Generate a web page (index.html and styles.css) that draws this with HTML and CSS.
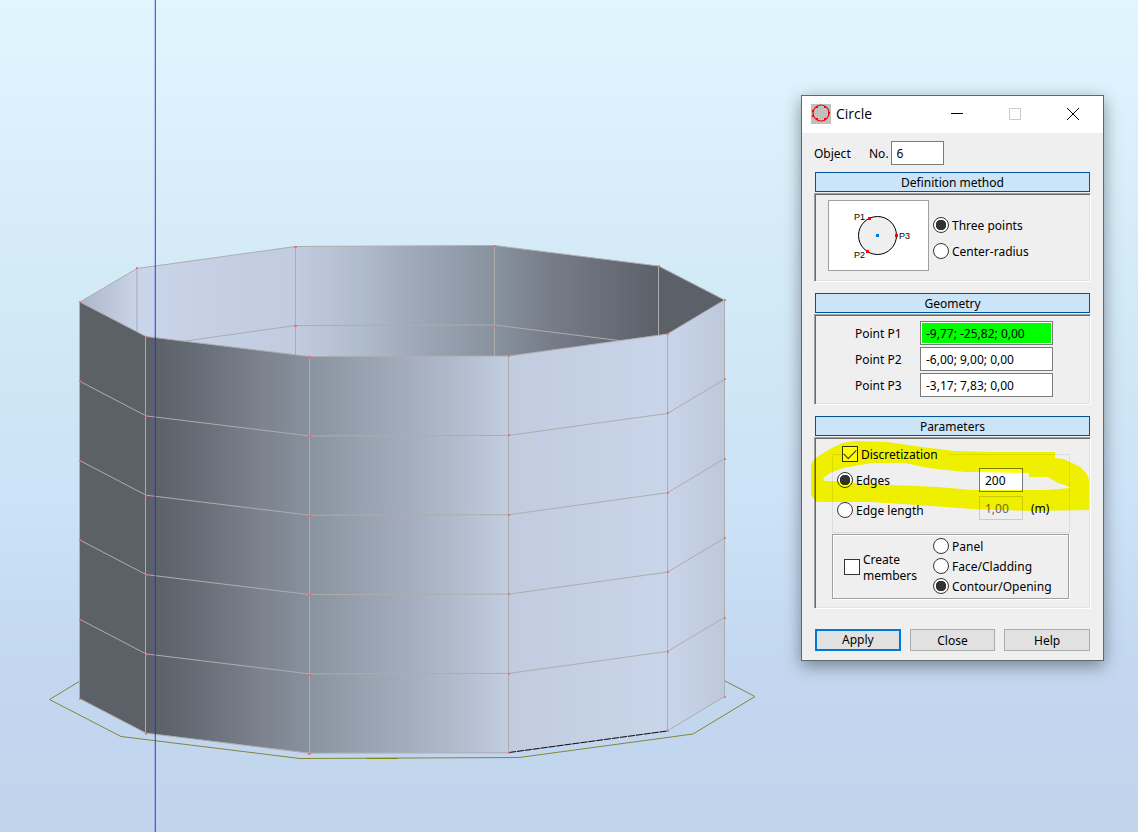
FILE: index.html
```html
<!DOCTYPE html>
<html lang="en">
<head>
<meta charset="utf-8">
<title>Circle</title>
<link rel="stylesheet" href="styles.css">
</head>
<body>
<main class="viewport">
  <svg class="scene" viewBox="0 0 1138 832" preserveAspectRatio="xMinYMin slice" aria-label="Polygonal tank model">
    <defs>
      <linearGradient id="aj"><stop offset="0" stop-color="#acb8c9"/><stop offset=".6" stop-color="#bdc8dc"/><stop offset="1" stop-color="#c8d4e8"/></linearGradient>
      <linearGradient id="ji"><stop offset="0" stop-color="#c9d5ea"/><stop offset="1" stop-color="#c2cbdf"/></linearGradient>
      <linearGradient id="ih"><stop offset="0" stop-color="#c2cbe0"/><stop offset=".35" stop-color="#aebbcb"/><stop offset=".55" stop-color="#a2abbc"/><stop offset="1" stop-color="#88929e"/></linearGradient>
      <linearGradient id="hg"><stop offset="0" stop-color="#88939f"/><stop offset=".3" stop-color="#797e8b"/><stop offset="1" stop-color="#5c6069"/></linearGradient>
      <linearGradient id="bc"><stop offset="0" stop-color="#5b5f67"/><stop offset=".2" stop-color="#61676f"/><stop offset=".7" stop-color="#7c828e"/><stop offset="1" stop-color="#87919d"/></linearGradient>
      <linearGradient id="cd"><stop offset="0" stop-color="#89949f"/><stop offset=".5" stop-color="#a4adbe"/><stop offset=".7" stop-color="#aebaca"/><stop offset="1" stop-color="#c2cde1"/></linearGradient>
      <linearGradient id="de"><stop offset="0" stop-color="#c1ccdf"/><stop offset="1" stop-color="#c9d5ea"/></linearGradient>
      <linearGradient id="ef"><stop offset="0" stop-color="#c9d5ea"/><stop offset="1" stop-color="#bdc8db"/></linearGradient>
      <path id="ring" d="M80 302L146 336.500 309.500 356.500 509 356 667.500 334 724.500 300"/>
      <g id="nodes">
        <rect x="79" y="301" width="2" height="2"/><rect x="145" y="336" width="2" height="2"/><rect x="308" y="356" width="3" height="2"/><rect x="508" y="355" width="2" height="2"/><rect x="667" y="333" width="2" height="2"/><rect x="724" y="299" width="2" height="2"/>
      </g>
    </defs>
    <path class="ground" d="M80 681L49.500 699.500 121 736.500 300 758.500 519 757.500 693 734 755 696.500 725 681"/>
    <path class="ground ground-bright" d="M366 758.500H398"/>
    <path fill="url(#aj)" d="M80 302L137 268.500V332z"/>
    <path fill="url(#ji)" d="M137 268.500L295.500 246.500V356L146 336.500 137 332z"/>
    <path fill="url(#ih)" d="M295.500 246.500L494.500 245.500V356.500H309.500L295.500 355z"/>
    <path fill="url(#hg)" d="M494.500 245.500L658.500 266V335.500L509 356.500H494.500z"/>
    <path fill="#5c6068" d="M658.500 266L724.500 300 667.500 334 658.500 336z"/>
    <g class="mesh">
      <path d="M80 302L137 268.500 295.500 246.500 494.500 245.500 658.500 266 724.500 300M137 268.500V332M295.500 246.500V355M494.500 245.500V356M658.500 266V335M182 341.500L295.500 325.500 494.500 325 619 340.500"/>
    </g>
    <path fill="#5c6067" d="M80 302L146 336.500V733L80 699z"/>
    <path fill="url(#bc)" d="M146 336.500L309.500 356.500V753L146 733z"/>
    <path fill="url(#cd)" d="M309.500 356.500L509 356V752.500L309.500 753z"/>
    <path fill="url(#de)" d="M509 356L667.500 334V731L509 752.500z"/>
    <path fill="url(#ef)" d="M667.500 334L724.500 300V696.500L667.500 731z"/>
    <g class="mesh">
      <use href="#ring"/><use href="#ring" y="79.400"/><use href="#ring" y="158.700"/><use href="#ring" y="238.100"/><use href="#ring" y="317.400"/><use href="#ring" y="396.700"/>
      <path d="M79.500 302V699M145.500 336V733M309.500 356V753M508.500 356V752M667.500 334V731M724.500 300V697"/>
    </g>
    <path class="picked" d="M509 752.500L667.500 731"/>
    <g class="nodes">
      <rect x="136" y="267" width="2" height="2"/><rect x="294" y="246" width="3" height="2"/><rect x="494" y="245" width="2" height="2"/><rect x="658" y="265" width="2" height="2"/><rect x="294" y="325" width="3" height="2"/><rect x="494" y="325" width="2" height="2"/>
      <use href="#nodes"/><use href="#nodes" y="79"/><use href="#nodes" y="159"/><use href="#nodes" y="238"/><use href="#nodes" y="318"/><use href="#nodes" y="397"/>
    </g>
    <rect class="axis-halo" x="154" y="0" width="1" height="832"/>
    <rect class="axis" x="155" y="0" width="1" height="832"/>
  </svg>

  <section class="dialog" role="dialog" aria-labelledby="dialog-title">
    <header class="titlebar">
      <svg class="app-icon" viewBox="0 0 20 20" aria-hidden="true">
        <path fill="#c0c0c0" d="M0 0h20v20H0z"/>
        <circle cx="10" cy="9" r="8" fill="none" stroke="#f00" stroke-width="1.200"/>
        <path fill="#f00" d="M5 2h2v2H5zM13 2h2v2h-2zM1 6h2v2H1zM17 8h2v2h-2zM1 11h2v2H1zM5 14h2v2H5zM13 14h2v2h-2z"/>
      </svg>
      <h1 class="title" id="dialog-title">Circle</h1>
      <button class="caption" aria-label="Minimize"><svg viewBox="0 0 12 12"><path d="M0 5.500h12"/></svg></button>
      <button class="caption" aria-label="Maximize" disabled><svg viewBox="0 0 12 12"><path d="M.5.5h11v11H.5z"/></svg></button>
      <button class="caption" aria-label="Close window"><svg viewBox="0 0 12 12"><path d="M0 0l12 12M12 0L0 12"/></svg></button>
    </header>
    <form class="content" onsubmit="return false">
      <div class="object-row">
        <span class="object-name">Object</span>
        <label for="object-no">No.</label>
        <input class="field object-no" id="object-no" value="6">
      </div>

      <h2 class="heading">Definition method</h2>
      <div class="panel method">
        <svg class="diagram" viewBox="0 0 99 69" role="img" aria-label="Circle through P1, P2, P3">
          <circle cx="48.500" cy="34.500" r="19" fill="#efefef" stroke="#000"/>
          <path fill="#f00" d="M39 16h3v3h-3zM66 33h3v3h-3zM37 49h3v3h-3z"/>
          <path fill="#0078d7" d="M47 33h3v3h-3z"/>
          <text x="25" y="19">P1</text><text x="70" y="38">P3</text><text x="25" y="57">P2</text>
        </svg>
        <div class="method-options">
          <label class="option"><input type="radio" name="method" checked><span>Three points</span></label>
          <label class="option"><input type="radio" name="method"><span>Center-radius</span></label>
        </div>
      </div>

      <h2 class="heading">Geometry</h2>
      <div class="panel points">
        <label for="p1">Point P1</label><input class="field active" id="p1" value="-9,77; -25,82; 0,00">
        <label for="p2">Point P2</label><input class="field" id="p2" value="-6,00; 9,00; 0,00">
        <label for="p3">Point P3</label><input class="field" id="p3" value="-3,17; 7,83; 0,00">
      </div>

      <h2 class="heading">Parameters</h2>
      <div class="panel parameters">
        <fieldset class="discretization">
          <legend><label class="option"><input type="checkbox" checked><span>Discretization</span></label></legend>
          <div class="edge-row">
            <label class="option"><input type="radio" name="edges" checked><span>Edges</span></label>
            <input class="field" value="200" aria-label="Number of edges">
          </div>
          <div class="edge-row">
            <label class="option"><input type="radio" name="edges"><span>Edge length</span></label>
            <input class="field" value="1,00" aria-label="Edge length" disabled>
            <span class="unit">(m)</span>
          </div>
        </fieldset>
        <div class="create">
          <label class="option members"><input type="checkbox"><span>Create members</span></label>
          <div class="create-options">
            <label class="option"><input type="radio" name="kind"><span>Panel</span></label>
            <label class="option"><input type="radio" name="kind"><span>Face/Cladding</span></label>
            <label class="option"><input type="radio" name="kind" checked><span>Contour/Opening</span></label>
          </div>
        </div>
        <svg class="marker" viewBox="811 441 278 70" aria-hidden="true">
          <path fill-rule="evenodd" d="M811 465L813 461 817 457 828 450 842 443 855 441 888 442 922 447 955 451 992 452H1055V458L1064 459 1072 463 1080 467 1087 474 1089 480V510L1032 511 972 509 932 506 872 502H817L811 495zM823 478L825 481 830 481 872 484 938 487 972 490 1045 490 1071 488 1065 485 1058 483 1048 477H1029V473L979 472 965 472 928 468 905 463 872 463 843 468 830 473z"/>
        </svg>
      </div>

      <footer class="actions">
        <button class="action primary">Apply</button>
        <button class="action">Close</button>
        <button class="action">Help</button>
      </footer>
    </form>
  </section>
</main>
</body>
</html>
```
FILE: styles.css
```css
* { box-sizing: border-box; }

body {
  margin: 0;
  font: 12px/16px "Noto Sans", "Open Sans", sans-serif;
  color: #000;
}

.viewport {
  position: relative;
  min-height: 100vh;
  overflow: hidden;
  background: linear-gradient(#e0f6ff, #d2e9f6 37%, #cce2f6 60%, #c3d8f0 80%, #c0d4ec);
}

.scene {
  position: absolute;
  inset: 0;
  width: 100%;
  height: 100%;
}

.mesh { fill: none; stroke: #adadad; }
.nodes { fill: #f06468; opacity: .75; }
.ground { fill: none; stroke: #858535; }
.ground-bright { stroke: #858500; }
.picked { fill: none; stroke: #10101c; stroke-dasharray: 7 1; }
.axis { fill: #2a2af0; fill-opacity: .75; }
.axis-halo { fill: #2a2af0; fill-opacity: .2; }

.dialog {
  position: absolute;
  top: 95px;
  right: 34px;
  width: 303px;
  border: 1px solid #60676f;
  background: #efefef;
  box-shadow: 0 5px 16px rgba(0, 0, 0, .4);
}

.titlebar {
  display: flex;
  align-items: center;
  height: 37px;
  padding: 0 1px 1px 9px;
  background: #fff;
}

.app-icon { width: 20px; height: 20px; }

.title {
  flex: 1;
  margin: 0 0 0 5px;
  font: 14px/20px "Open Sans", "Noto Sans", sans-serif;
}

.caption {
  display: grid;
  place-items: center;
  width: 58px;
  height: 36px;
  padding: 0;
  border: 0;
  background: none;
}

.caption svg { width: 12px; height: 12px; fill: none; stroke: #000; overflow: visible; }
.caption:disabled svg { stroke: #ccc; }

.content { padding: 8px 12px 9px; }

.object-row { display: flex; align-items: center; margin-bottom: 7px; }
.object-name { width: 55px; }
.object-row span,
.object-row label,
.points label { padding-top: 1px; }

.field {
  min-width: 0;
  height: 24px;
  padding: 0 5px;
  border: 1px solid #7a7a7a;
  background: #fff;
  font: inherit;
  color: #000;
}

.object-no { width: 53px; margin-left: 2px; }
.active { background: #0f0; box-shadow: inset 0 0 0 1px #fff; }
.field:disabled { border-color: #ccc; background: #efefef; color: #6d6d6d; }

.heading {
  height: 20px;
  margin: 0 1px 1px;
  padding-top: 1px;
  border: 1px solid #005499;
  background: #cce4f7;
  font: 12px/18px "Noto Sans", "Open Sans", sans-serif;
  text-align: center;
}

.panel {
  position: relative;
  margin-bottom: 11px;
  border: 1px solid;
  border-color: #a0a0a0 #fff #fff #a0a0a0;
  box-shadow: inset 1px 1px #696969, inset -1px -1px #e3e3e3;
}

.option { display: flex; align-items: center; gap: 3px; }
.option span { margin: 1px 0 -1px; }

input[type="radio"],
input[type="checkbox"] {
  appearance: none;
  flex: none;
  width: 16px;
  height: 16px;
  margin: 0;
  border: 1px solid #333;
  background: #fff;
}

input[type="radio"] { border-radius: 50%; }
input[type="radio"]:checked { background: radial-gradient(circle, #333 5px, #fff 5.5px); }

input[type="checkbox"] { display: grid; place-items: center; }
input[type="checkbox"]:checked::after {
  content: "";
  width: 11px;
  height: 6px;
  border: solid #333;
  border-width: 0 0 1px 1px;
  transform: translateY(-2px) rotate(-45deg);
}

.method { display: flex; gap: 4px; padding: 6px 13px 10px; }
.diagram {
  width: 101px;
  height: 71px;
  border: 1px solid #a0a0a0;
  background: #fff;
  font: 9px "Liberation Sans", sans-serif;
}
.method-options { display: flex; flex-direction: column; gap: 10px; padding-top: 17px; }

.points {
  display: grid;
  grid-template-columns: 65px 133px;
  row-gap: 2px;
  align-items: center;
  padding: 6px 40px 7px;
}

.parameters { padding: 8px 21px 9px 17px; }

.discretization {
  height: 87px;
  margin: 0 -1px 1px 0;
  padding: 6px 0 0 4px;
  border: 1px solid #dcdcdc;
}
.discretization legend { margin-left: 5px; padding: 0 10px 0 0; }

.edge-row {
  display: grid;
  grid-template-columns: 142px 44px 30px;
  align-items: center;
  margin-bottom: 4px;
}
.edge-row + .edge-row .option { padding-top: 4px; }
.unit { padding: 2px 0 0 8px; }

.create {
  display: grid;
  grid-template-columns: 89px 1fr;
  align-items: center;
  padding: 1px 0 2px 11px;
  border: 1px solid #a0a0a0;
  box-shadow: 1px 1px #fff, inset 1px 1px #fff;
}
.members { padding-top: 2px; }
.members span { width: 58px; }
.create-options .option { height: 20px; }

.marker {
  position: absolute;
  top: 3px;
  left: -4px;
  width: 278px;
  height: 70px;
  fill: #ff0;
  mix-blend-mode: multiply;
  pointer-events: none;
}

.actions { display: grid; grid-template-columns: repeat(3, 1fr); gap: 9px; margin: 20px 1px 0; }
.action {
  height: 22px;
  padding: 1px 0 0;
  border: 1px solid #adadad;
  background: #e1e1e1;
  font: inherit;
  color: #000;
}
.primary { padding: 0; border: 2px solid #0078d7; }
```
